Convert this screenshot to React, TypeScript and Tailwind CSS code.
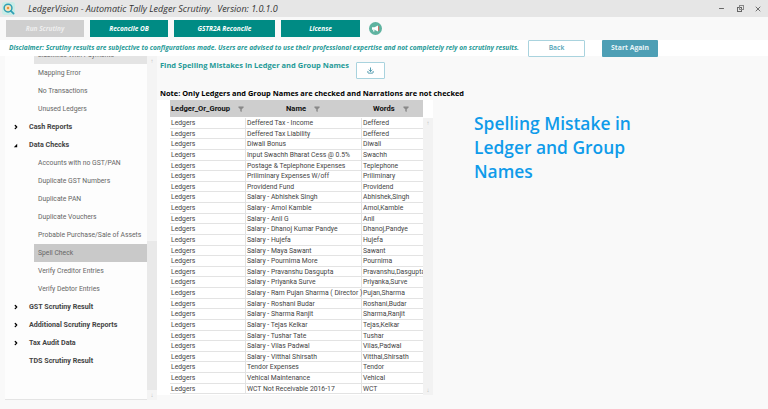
import { Download, Filter, Minus, X, ChevronRight } from "lucide-react";

const rows = [
  ["Deffered Tax - Income", "Deffered"],
  ["Deffered Tax Liability", "Deffered"],
  ["Diwali Bonus", "Diwali"],
  ["Input Swachh Bharat Cess @ 0.5%", "Swachh"],
  ["Postage & Teplephone Expenses", "Teplephone"],
  ["Priliminary Expenses W/off", "Priliminary"],
  ["Providend Fund", "Providend"],
  ["Salary - Abhishek Singh", "Abhishek,Singh"],
  ["Salary - Amol Kamble", "Amol,Kamble"],
  ["Salary - Anil G", "Anil"],
  ["Salary - Dhanoj Kumar Pandye", "Dhanoj,Pandye"],
  ["Salary - Hujefa", "Hujefa"],
  ["Salary - Maya Sawant", "Sawant"],
  ["Salary - Pournima More", "Pournima"],
  ["Salary - Pravanshu Dasgupta", "Pravanshu,Dasgupta"],
  ["Salary - Priyanka Surve", "Priyanka,Surve"],
  ["Salary - Ram Pujan Sharma ( Director )", "Pujan,Sharma"],
  ["Salary - Roshani Budar", "Roshani,Budar"],
  ["Salary - Sharma Ranjit", "Sharma,Ranjit"],
  ["Salary - Tejas Kelkar", "Tejas,Kelkar"],
  ["Salary - Tushar Tate", "Tushar"],
  ["Salary - Vilas Padwal", "Vilas,Padwal"],
  ["Salary - Vitthal Shirsath", "Vitthal,Shirsath"],
  ["Tendor Expenses", "Tendor"],
  ["Vehical Maintenance", "Vehical"],
  ["WCT Not Receivable 2016-17", "WCT"],
];

const TopButton = ({ label, width, disabled }: { label: string; width: string; disabled?: boolean }) => (
  <button
    className={`${width} h-[17px] flex items-center justify-center font-['Open_Sans',sans-serif] text-[6.5px] font-bold italic ${
      disabled ? "bg-[#cfcfcf] text-[#eeeeee]" : "bg-[#008b84] text-white"
    }`}
  >
    {label}
  </button>
);

const Group = ({ label, open, noArrow }: { label: string; open?: boolean; noArrow?: boolean }) => (
  <div className="h-[18px] flex items-center text-[7.15px] font-bold text-[#444444] whitespace-nowrap">
    <span className="w-[24px] pl-[8px] flex items-center">
      {noArrow ? null : open ? (
        <svg viewBox="0 0 6 6" className="size-[5px] text-black" fill="currentColor">
          <path d="M5 1v4H1z" />
        </svg>
      ) : (
        <ChevronRight className="size-[6px] text-black" strokeWidth={5} />
      )}
    </span>
    {label}
  </div>
);

const Item = ({ label, bg }: { label: string; bg?: string }) => (
  <div className={`h-[18px] ml-[29px] pl-[4px] flex items-center text-[6.8px] text-[#666666] whitespace-nowrap ${bg ?? ""}`}>
    {label}
  </div>
);

const HeaderCell = ({ label, width, pad }: { label: string; width: string; pad: string }) => (
  <div className={`${width} ${pad} h-full flex items-center gap-[8px] text-[7.6px] font-bold text-[#111111]`}>
    <span>{label}</span>
    <Filter className="size-[6px] fill-[#8a8a8a] text-[#8a8a8a]" />
  </div>
);

export default function App() {
  return (
    <div className="w-[768px] h-[409px] overflow-hidden bg-[#f9f9f9] flex flex-col font-['Roboto',sans-serif]">
      <div className="h-[17px] bg-[#e6e6e6] flex items-center pl-[2px] pr-[6px]">
        <svg viewBox="0 0 14 14" className="size-[13px] mr-[13px]">
          <rect width="14" height="14" rx="3" fill="#c9ece6" />
          <circle cx="6.5" cy="6.5" r="4.2" fill="#f6e3bd" stroke="#2f9fb5" strokeWidth="1.6" />
          <circle cx="6.5" cy="6.5" r="1.3" fill="#e8963c" />
          <path d="M9.5 9.5l3 3" stroke="#2f9fb5" strokeWidth="1.8" strokeLinecap="round" />
        </svg>
        <span className="font-['Open_Sans',sans-serif] text-[9px] italic text-[#333333] whitespace-pre">
          LedgerVision - Automatic Tally Ledger Scrutiny.  Version: 1.0.1.0
        </span>
        <div className="ml-auto flex items-center gap-[12px] text-[#555555]">
          <Minus className="size-[7px]" strokeWidth={3} />
          <div className="relative size-[5px] mt-[1px] border border-[#666666] bg-[#e6e6e6]">
            <div className="absolute -top-[3px] left-[1px] size-[5px] border border-[#888888]" />
          </div>
          <X className="size-[8px]" strokeWidth={2.5} />
        </div>
      </div>

      <div className="h-[23px] flex items-center gap-[6px] pl-[6px]">
        <TopButton label="Run Scrutiny" width="w-[78px]" disabled />
        <TopButton label="Reconcile OB" width="w-[78px]" />
        <TopButton label="GSTR2A Reconcile" width="w-[101px]" />
        <TopButton label="License" width="w-[79px]" />
        <svg viewBox="0 0 13 13" className="ml-[3px] size-[13px]">
          <circle cx="6.5" cy="6.5" r="6.5" fill="#5fb3a0" />
          <path d="M3 5.3h2.5L9 3.6v5.8L5.5 7.7H3z" fill="#ffffff" />
          <path d="M9.6 4.2v4.6" stroke="#d9695f" strokeWidth="1" />
          <path d="M4.2 7.8h1.2v1.8H4.2z" fill="#ffffff" />
        </svg>
      </div>

      <div className="h-[16px] bg-white flex items-center pl-[9px] font-['Open_Sans',sans-serif]">
        <span className="w-[519px] text-[6.62px] font-bold italic text-[#1f9a97] whitespace-nowrap">
          Disclaimer: Scrutiny results are subjective to configurations made. Users are advised to use their professional expertise and not completely rely on scrutiny results.
        </span>
        <button className="w-[57px] h-[17px] bg-white border border-[#a9d3de] rounded-[1px] text-[6.8px] font-semibold text-[#4f9fb5]">
          Back
        </button>
        <button className="ml-[17px] w-[56px] h-[17px] bg-[#4e9fb5] rounded-[1px] text-[6.8px] font-bold text-[#e8f4f7]">
          Start Again
        </button>
      </div>

      <div className="flex-1 flex min-h-0">
        <div className="ml-[5px] mb-[9px] w-[142px] bg-[#fdfdfd] overflow-hidden border-b border-[#e4e4e4]">
          <div className="-mt-[10px]">
            <Item label="Liabilities With Payments" bg="bg-[#e4e4e4]" />
            <Item label="Mapping Error" />
            <Item label="No Transactions" />
            <Item label="Unused Ledgers" />
            <Group label="Cash Reports" />
            <Group label="Data Checks" open />
            <Item label="Accounts with no GST/PAN" />
            <Item label="Duplicate GST Numbers" />
            <Item label="Duplicate PAN" />
            <Item label="Duplicate Vouchers" />
            <Item label="Probable Purchase/Sale of Assets" />
            <Item label="Spell Check" bg="bg-[#c9c9c9]" />
            <Item label="Verify Creditor Entries" />
            <Item label="Verify Debtor Entries" />
            <Group label="GST Scrutiny Result" />
            <Group label="Additional Scrutiny Reports" />
            <Group label="Tax Audit Data" />
            <Group label="TDS Scrutiny Result" noArrow />
          </div>
        </div>

        <div className="mb-[9px] w-[10px] bg-[#f4f4f4] flex flex-col items-center text-[6px] text-[#bbbbbb]">
          <span className="h-[10px] leading-[10px]">↑</span>
          <div className="mt-[175px] w-full flex-1 bg-[#e9e9e9]" />
          <span className="h-[10px] leading-[10px]">↓</span>
        </div>

        <div className="flex-1 pl-[3px] min-w-0 font-['Open_Sans',sans-serif]">
          <div className="h-[31px] pt-[4px] flex items-start">
            <span className="w-[196px] text-[7.5px] font-bold text-[#1f9a97] whitespace-nowrap">
              Find Spelling Mistakes in Ledger and Group Names
            </span>
            <button className="mt-[2px] w-[29px] h-[17px] bg-white border border-[#a9d3de] rounded-[1px] flex items-center justify-center">
              <Download className="size-[7px] text-[#3f8fa5]" strokeWidth={3} />
            </button>
          </div>
          <div className="h-[13px] text-[7.4px] font-bold text-black whitespace-nowrap leading-[13px]">
            Note: Only Ledgers and Group Names are checked and Narrations are not checked
          </div>

          <div className="flex">
            <div className="w-[276px] -ml-[3px] bg-white h-[295px] flex flex-col font-['Roboto',sans-serif]">
              <div className="h-[17px] flex shrink-0">
                <div className="w-[13px]" />
                <div className="w-[253px] h-full bg-[#cecece] flex">
                  <HeaderCell label="Ledger_Or_Group" width="w-[76px]" pad="pl-[1px]" />
                  <HeaderCell label="Name" width="w-[116px]" pad="pl-[40px]" />
                  <HeaderCell label="Words" width="w-[61px]" pad="pl-[11px]" />
                </div>
              </div>
              <div className="flex mt-[1px]">
                <div className="ml-[13px] w-[253px]">
                  {rows.map((r, i) => (
                    <div
                      key={i}
                      className="h-[10.64px] flex items-center border-b border-[#e3e3e3] text-[6.8px] text-[#444444] whitespace-nowrap"
                    >
                      <span className="w-[76px] pl-[1px] h-full leading-[10px] border-r border-[#e3e3e3]">Ledgers</span>
                      <span className="w-[116px] pl-[1px] h-full leading-[10px] border-r border-[#e3e3e3]">{r[0]}</span>
                      <span className="w-[61px] pl-[1px] h-full leading-[10px]">{r[1]}</span>
                    </div>
                  ))}
                </div>
                <div className="w-[10px] h-[277px] bg-[#f2f2f2] flex flex-col justify-between items-center text-[6px] text-[#bbbbbb]">
                  <span className="leading-[10px]">↑</span>
                  <span className="leading-[10px]">↓</span>
                </div>
              </div>
            </div>

            <div className="pl-[41px] pt-[11px] text-[17.4px] leading-[24px] font-semibold text-[#0f9bea]">
              Spelling Mistake in
              <br />
              Ledger and Group
              <br />
              Names
            </div>
          </div>
        </div>
      </div>
    </div>
  );
}
